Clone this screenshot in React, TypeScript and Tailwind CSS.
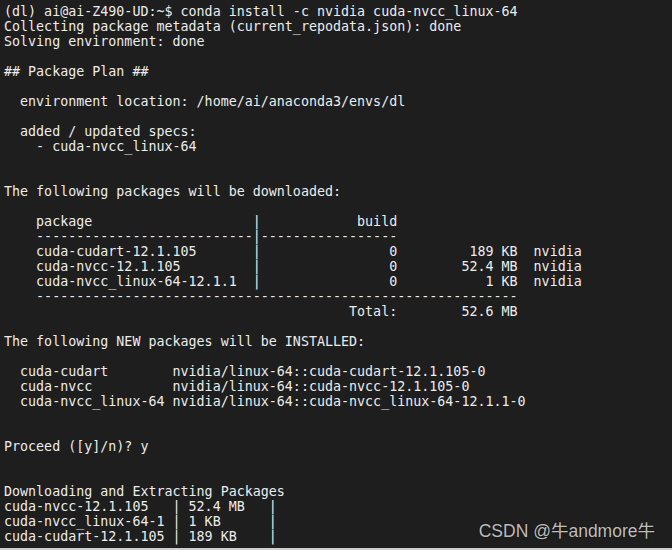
const lines: string[] = [
  "(dl) ai@ai-Z490-UD:~$ conda install -c nvidia cuda-nvcc_linux-64",
  "Collecting package metadata (current_repodata.json): done",
  "Solving environment: done",
  "",
  "## Package Plan ##",
  "",
  "  environment location: /home/ai/anaconda3/envs/dl",
  "",
  "  added / updated specs:",
  "    - cuda-nvcc_linux-64",
  "",
  "",
  "The following packages will be downloaded:",
  "",
  "    package                    |            build",
  "    ---------------------------|-----------------",
  "    cuda-cudart-12.1.105       |                0         189 KB  nvidia",
  "    cuda-nvcc-12.1.105         |                0        52.4 MB  nvidia",
  "    cuda-nvcc_linux-64-12.1.1  |                0           1 KB  nvidia",
  "    ------------------------------------------------------------",
  "                                           Total:        52.6 MB",
  "",
  "The following NEW packages will be INSTALLED:",
  "",
  "  cuda-cudart        nvidia/linux-64::cuda-cudart-12.1.105-0",
  "  cuda-nvcc          nvidia/linux-64::cuda-nvcc-12.1.105-0",
  "  cuda-nvcc_linux-64 nvidia/linux-64::cuda-nvcc_linux-64-12.1.1-0",
  "",
  "",
  "Proceed ([y]/n)? y",
  "",
  "",
  "Downloading and Extracting Packages",
  "cuda-nvcc-12.1.105   | 52.4 MB   |",
  "cuda-nvcc_linux-64-1 | 1 KB      |",
  "cuda-cudart-12.1.105 | 189 KB    |",
];

export default function App() {
  return (
    <div className="relative w-[672px] h-[550px] overflow-hidden bg-[#1e1e1e] border-b-2 border-[#cfcfcf]">
      <div className="pl-[4px] pt-[4px] font-['DejaVu_Sans_Mono',monospace] text-[13.33px] leading-[15px] text-[#ececec]">
        {lines.map((line, i) => (
          <div key={i} className="h-[15px] whitespace-pre">
            {line}
          </div>
        ))}
      </div>
      {/* watermark */}
      <div className="absolute right-[17px] bottom-[7px] font-['Liberation_Sans','Noto_Sans_CJK_SC',sans-serif] text-[17.5px] leading-[20px] text-[#bdbdbd] [text-shadow:0_0_2px_rgba(0,0,0,0.6)]">
        CSDN @牛andmore牛
      </div>
    </div>
  );
}
